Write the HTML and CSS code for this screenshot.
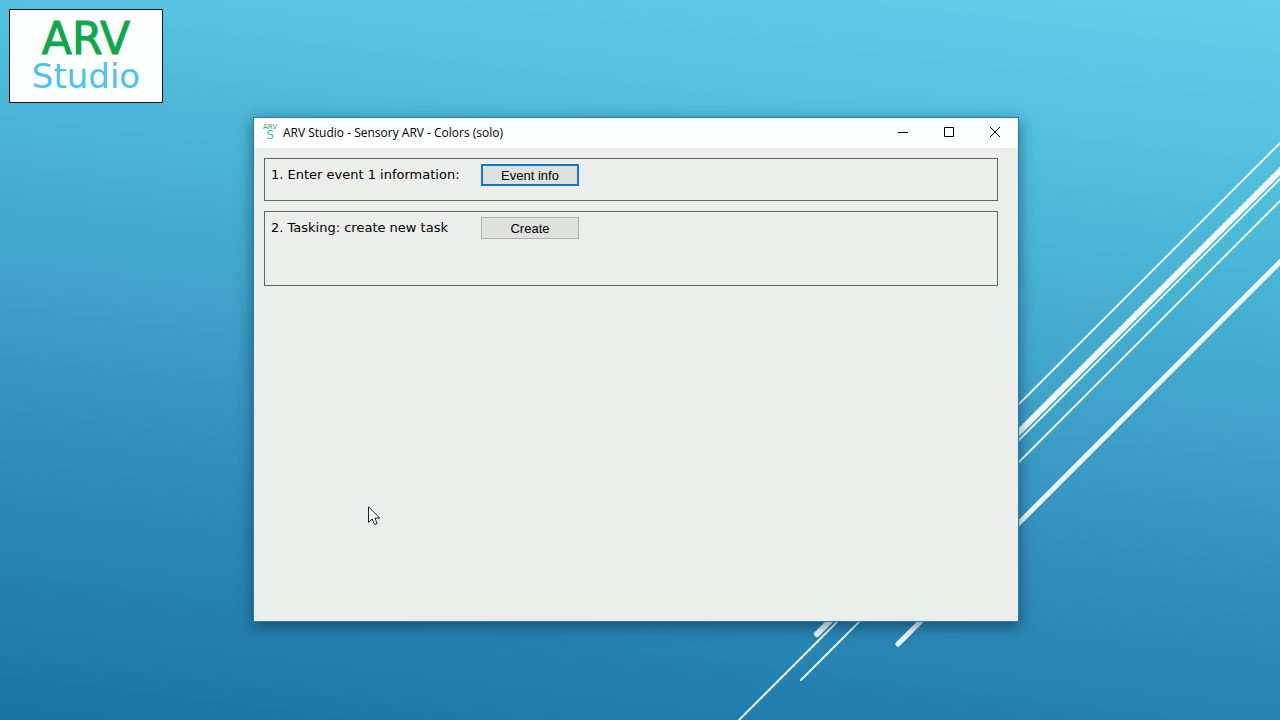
FILE: index.html
```html
<!DOCTYPE html>
<html lang="en">

<head>
    <meta charset="UTF-8">
    <meta name="viewport" content="width=device-width, initial-scale=1.0">
    <title>ARV Studio</title>
    <link rel="stylesheet" href="styles.css">
</head>

<body>

    <!-- diagonal lines of the wallpaper -->
    <svg class="lines" width="560" height="600" viewBox="720 120 560 600" aria-hidden="true">
        <g stroke="#defafa" stroke-width="2" stroke-linecap="round">
            <path d="M830 593L1290 133" />
            <path d="M729 730L1290 169" />
            <path d="M801 680L1290 191" />
        </g>
        <g stroke="#f0fbfb" stroke-linecap="round">
            <path stroke-width="6" d="M817 634L1290 161" />
            <path stroke-width="5" d="M898 644L1290 252" />
        </g>
    </svg>

    <div class="logo">
        <span class="logo-arv">ARV</span>
        <span class="logo-studio">Studio</span>
    </div>

    <div class="window">
        <div class="title-bar">
            <svg class="app-icon" width="16" height="20" viewBox="0 0 16 20" aria-hidden="true">
                <text class="icon-arv" x="8" y="7" text-anchor="middle">ARV</text>
                <text class="icon-s" x="8" y="17" text-anchor="middle">S</text>
            </svg>
            <h1 class="title">ARV Studio - Sensory ARV - Colors (solo)</h1>
            <button type="button" class="win-btn" aria-label="Minimize">
                <svg width="10" height="10" viewBox="0 0 10 10"><path d="M0 5.5H10" /></svg>
            </button>
            <button type="button" class="win-btn" aria-label="Maximize">
                <svg width="10" height="10" viewBox="0 0 10 10"><path d="M.5 .5H9.5V9.5H.5Z" /></svg>
            </button>
            <button type="button" class="win-btn" aria-label="Close">
                <svg width="10" height="10" viewBox="0 0 10 10"><path d="M0 0L10 10M10 0L0 10" /></svg>
            </button>
        </div>

        <div class="content">
            <div class="panel">
                <label class="step" for="event-info">1. Enter event 1 information:</label>
                <button type="button" class="btn btn-active" id="event-info">Event info</button>
            </div>
            <div class="panel panel-task">
                <label class="step" for="create">2. Tasking: create new task</label>
                <button type="button" class="btn" id="create">Create</button>
            </div>
        </div>
    </div>

    <svg class="cursor" width="13" height="20" viewBox="0 0 13 20" aria-hidden="true">
        <path d="M.5 .8V16.5L4.2 13L6.6 18.6L9.2 17.5L6.9 12.1H11.8Z" />
    </svg>

</body>

</html>
```

FILE: styles.css
```css
* {
    box-sizing: border-box;
}

body {
    position: relative;
    min-height: 100vh;
    margin: 0;
    padding: 9px;
    overflow: hidden;
    background: linear-gradient(187deg, #5fd0ea 0%, #4ab5d6 31%, #3594c0 62%, #2682b0 83%, #1b72a4 100%);
    font-family: "DejaVu Sans", Verdana, sans-serif;
    font-size: 13px;
    color: #000;
}

.lines {
    position: absolute;
    right: 0;
    bottom: 0;
}

/* logo */

.logo {
    display: flex;
    flex-direction: column;
    align-items: center;
    justify-content: center;
    width: 154px;
    height: 94px;
    border: 1px solid #06141c;
    background-color: #fcfffd;
}

.logo-arv {
    font-size: 44px;
    line-height: 40px;
    color: #11a64b;
    -webkit-text-stroke: 1px #11a64b;
}

.logo-studio {
    font-size: 34px;
    line-height: 34px;
    color: #4cc3ec;
}

/* application window */

.window {
    position: absolute;
    top: 117px;
    right: 261px;
    bottom: 98px;
    left: 253px;
    border: 1px solid #1b7fc1;
    background-color: #eceeec;
    box-shadow: 0 4px 14px rgba(0, 20, 40, .5);
}

.title-bar {
    display: flex;
    align-items: center;
    height: 30px;
    padding: 0 0 2px 8px;
    background-color: #fcfffd;
}

.icon-arv {
    font-size: 7px;
    fill: #2fa566;
}

.icon-s {
    font-size: 12px;
    fill: #3cbbe6;
}

.title {
    flex: 1;
    margin: 0 0 0 5px;
    font-family: "Open Sans", "Noto Sans", sans-serif;
    font-size: 12px;
    font-weight: normal;
}

.win-btn {
    display: flex;
    align-items: center;
    justify-content: center;
    width: 46px;
    height: 28px;
    padding: 0;
    border: 0;
    background: none;
}

.win-btn path {
    fill: none;
    stroke: #000;
}

.content {
    display: flex;
    flex-direction: column;
    gap: 10px;
    padding: 10px 20px 10px 10px;
}

.panel {
    display: flex;
    align-items: flex-start;
    min-height: 43px;
    padding: 5px 6px;
    border: 1px solid #626462;
}

.panel-task {
    min-height: 75px;
}

.step {
    width: 210px;
    line-height: 22px;
}

.btn {
    width: 98px;
    height: 22px;
    padding: 0;
    border: 1px solid #adafad;
    background-color: #dfe1df;
    font-family: "Liberation Sans", Arial, sans-serif;
    font-size: 13px;
    color: #000;
}

.btn-active {
    border: 2px solid #1078c0;
}

.cursor {
    position: absolute;
    top: 506px;
    left: 368px;
}

.cursor path {
    fill: #fff;
    stroke: #1c1c28;
}
```
